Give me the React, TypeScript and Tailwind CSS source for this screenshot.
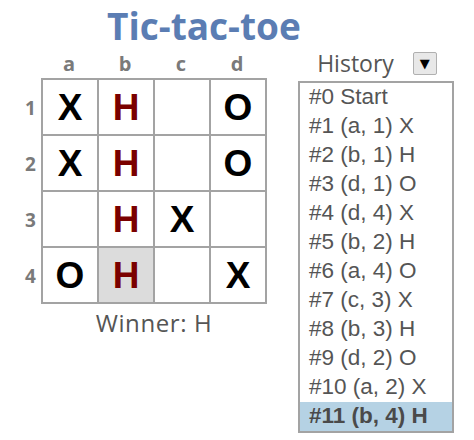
import React from "react";

type Piece = "X" | "O" | "H" | "";

const COLS = ["a", "b", "c", "d"];
const ROWS = ["1", "2", "3", "4"];

const BOARD: Piece[][] = [
  ["X", "H", "", "O"],
  ["X", "H", "", "O"],
  ["", "H", "X", ""],
  ["O", "H", "", "X"],
];

const HISTORY = [
  "#0 Start",
  "#1 (a, 1) X",
  "#2 (b, 1) H",
  "#3 (d, 1) O",
  "#4 (d, 4) X",
  "#5 (b, 2) H",
  "#6 (a, 4) O",
  "#7 (c, 3) X",
  "#8 (b, 3) H",
  "#9 (d, 2) O",
  "#10 (a, 2) X",
  "#11 (b, 4) H",
];

const sans = "font-['Open_Sans','Liberation_Sans',sans-serif]";

function Cell({ piece, last }: { piece: Piece; last: boolean }) {
  return (
    <div
      className={`flex h-[54px] w-[54px] items-center justify-center font-['Liberation_Sans',Arial,sans-serif] text-[37px] font-bold leading-none ${
        last ? "bg-[#dcdcdc]" : "bg-white"
      } ${piece === "H" ? "text-[#7a0000]" : "text-black"}`}
    >
      {piece}
    </div>
  );
}

function Board() {
  return (
    <div className="flex flex-col">
      <div className="flex h-[28px] pl-[21px]">
        {COLS.map((c) => (
          <div
            key={c}
            className={`flex w-[56px] items-center justify-center ${sans} text-[20px] font-bold leading-none text-[#7a7a7a]`}
          >
            {c}
          </div>
        ))}
      </div>
      <div className="flex">
        <div className="flex w-[21px] flex-col pt-[2px]">
          {ROWS.map((r) => (
            <div
              key={r}
              className={`flex h-[56px] items-center justify-center ${sans} text-[19px] font-bold leading-none text-[#7a7a7a]`}
            >
              {r}
            </div>
          ))}
        </div>
        <div className="grid grid-cols-4 gap-[2px] bg-[#a3a3a3] p-[2px]">
          {BOARD.map((row, y) =>
            row.map((p, x) => (
              <Cell key={`${x}-${y}`} piece={p} last={x === 1 && y === 3} />
            ))
          )}
        </div>
      </div>
      <div className="flex pl-[21px] pt-[4px]">
        <span
          className={`w-[226px] text-center ${sans} text-[24px] leading-[30px] tracking-[0.6px] text-[#555]`}
        >
          Winner: H
        </span>
      </div>
    </div>
  );
}

function History() {
  return (
    <div className="flex w-[156px] flex-col">
      <div className="flex h-[31px] items-center justify-center gap-[19px] pb-[4px] pl-[2px]">
        <span className={`${sans} text-[23px] leading-none text-[#555]`}>History</span>
        <button className="flex h-[23px] w-[24px] items-center justify-center rounded-[2px] border border-[#b0b0b0] bg-[#e8e8e8] font-['DejaVu_Sans',sans-serif] text-[13px] leading-none text-black">
          ▼
        </button>
      </div>
      <ul className="border-2 border-[#a3a3a3] bg-white">
        {HISTORY.map((h, i) => {
          const sel = i === HISTORY.length - 1;
          return (
            <li
              key={h}
              className={`flex h-[29px] items-center pl-[9px] font-['Liberation_Sans',Arial,sans-serif] text-[22.5px] leading-none ${
                sel ? "bg-[#b5d2e4] font-bold text-[#4a4a4a]" : "text-[#555]"
              }`}
            >
              {h}
            </li>
          );
        })}
      </ul>
    </div>
  );
}

export default function App() {
  return (
    <div className="h-[440px] w-[474px] overflow-hidden bg-white">
      <h1
        className={`flex h-[50px] items-center pl-[107px] ${sans} text-[37px] font-bold leading-none text-[#5b7db3]`}
      >
        Tic-tac-toe
      </h1>
      <div className="flex pl-[20px]">
        <Board />
        <div className="ml-[31px]">
          <History />
        </div>
      </div>
    </div>
  );
}
